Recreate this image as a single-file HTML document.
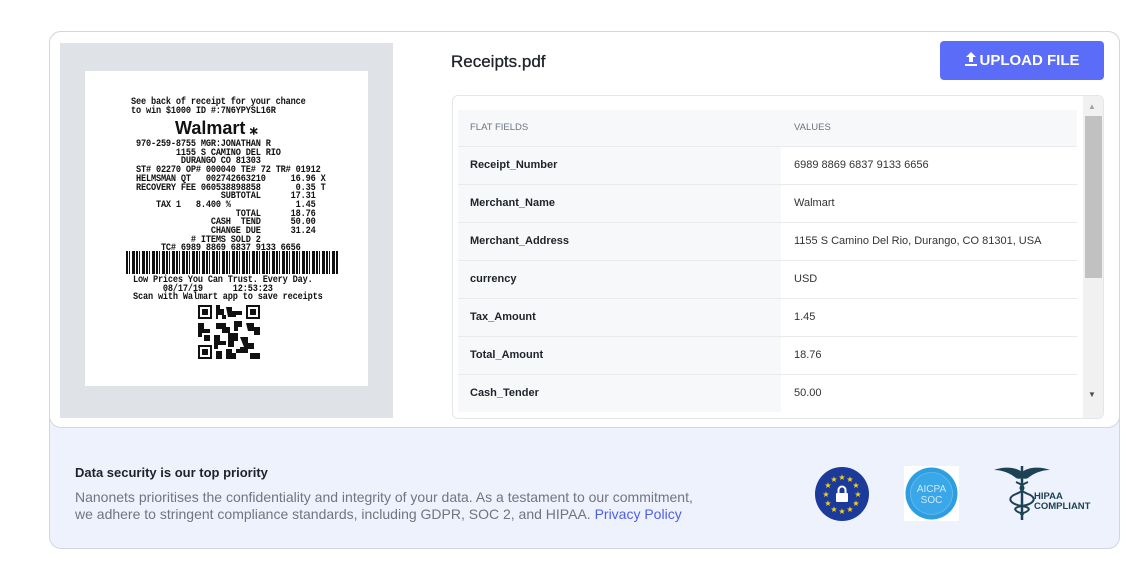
<!DOCTYPE html>
<html><head><meta charset="utf-8"><style>
*{margin:0;padding:0;box-sizing:border-box}
body{width:1141px;height:575px;background:#fff;font-family:"Liberation Sans",sans-serif;position:relative;overflow:hidden}
.outer{position:absolute;left:49px;top:31px;width:1071px;height:518px;border:1px solid #d3d6dc;border-radius:12px;background:#eef2fd}
.top{position:absolute;left:49px;top:31px;width:1071px;height:397px;border:1px solid #d3d6dc;border-radius:12px;background:#fff}
.imgbox{position:absolute;left:60px;top:43px;width:333px;height:375px;background:#dfe2e6}
.receipt{position:absolute;left:85px;top:71px;width:283px;height:315px;background:#fff;overflow:hidden}
.rt{position:absolute;font-family:"Liberation Mono",monospace;font-size:10px;font-weight:bold;line-height:8.7px;color:#111;white-space:pre;transform:scaleX(0.86);transform-origin:0 0;letter-spacing:-0.2px}
.title{position:absolute;left:451px;top:52px;font-size:17px;color:#1f2328;-webkit-text-stroke:0.3px #1f2328}
.btn{position:absolute;left:940px;top:41px;width:164px;height:39px;background:#5b6cf9;border-radius:4px;color:#fff;font-weight:bold;font-size:15px;text-align:center;line-height:39px}
.tbl{position:absolute;left:452px;top:95px;width:652px;height:324px;border:1px solid #e4e6ea;border-radius:6px;background:#fff;overflow:hidden}
.row{position:absolute;left:5px;width:619px;height:38px;border-top:1px solid #e8eaed;font-size:11px;color:#222}
.row .a{position:absolute;left:0;top:0;width:323px;height:100%;background:#f7f8fa;padding-left:12px;line-height:37px;font-weight:bold;color:#1e2329}
.row .b{position:absolute;left:336px;top:0;line-height:37px;color:#333}
.hd{position:absolute;left:5px;top:14px;width:619px;height:36px;background:#f7f8fa;font-size:9.5px;color:#6b7280;line-height:36px}
.sb{position:absolute;left:630px;top:0;width:22px;height:324px;background:#f1f1f1}
h4{position:absolute;left:75px;top:465px;font-size:13px;color:#1f2328}
p.d{position:absolute;left:75px;top:489px;font-size:14px;line-height:17px;color:#70757e;width:700px;white-space:nowrap}
p.d a{color:#4f5ee8;text-decoration:none}
</style></head><body>
<div class="outer"></div>
<div class="top"></div>
<div class="imgbox"></div>
<div class="receipt">
<div class="rt" style="left:46px;top:28px">See back of receipt for your chance
to win $1000 ID #:7N6YPYSL16R</div>
<div style="position:absolute;left:90px;top:47px;font-weight:bold;font-size:18px;color:#111;font-family:'Liberation Sans',sans-serif">Walmart<span style="font-size:16px"> ⁎</span></div>
<div class="rt" style="left:51px;top:70px">970-259-8755 MGR:JONATHAN R
        1155 S CAMINO DEL RIO
         DURANGO CO 81303
ST# 02270 OP# 000040 TE# 72 TR# 01912
HELMSMAN QT   002742663210     16.96 X
RECOVERY FEE 060538898858       0.35 T
                 SUBTOTAL      17.31
    TAX 1   8.400 %             1.45
                    TOTAL      18.76
               CASH  TEND      50.00
               CHANGE DUE      31.24
           # ITEMS SOLD 2
     TC# 6989 8869 6837 9133 6656</div>
<div style="position:absolute;left:41px;top:180px;width:212px;height:23px;background:repeating-linear-gradient(90deg,#111 0 2px,#fff 2px 3px,#111 3px 4px,#fff 4px 6px,#111 6px 9px,#fff 9px 10px)"></div>
<div class="rt" style="left:48px;top:206px">Low Prices You Can Trust. Every Day.
      08/17/19      12:53:23
Scan with Walmart app to save receipts</div>
<svg style="position:absolute;left:113px;top:233px" width="62" height="56" viewBox="0 0 31 27"><rect width="31" height="27" fill="#fff"/><g fill="#111"><rect x="0" y="0" width="7" height="7"/><rect x="24" y="0" width="7" height="7"/><rect x="0" y="20" width="7" height="7"/></g><g fill="#fff"><rect x="1" y="1" width="5" height="5"/><rect x="25" y="1" width="5" height="5"/><rect x="1" y="21" width="5" height="5"/></g><g fill="#111"><rect x="2" y="2" width="3" height="3"/><rect x="26" y="2" width="3" height="3"/><rect x="2" y="22" width="3" height="3"/><path d="M9 0h2v2h2v3h-3v2h-1zM14 1h3v2h2v3h-4zM9 9h5v2h2v3h-4v-2h-3zM18 8h4v3h-2v2h-2zM0 9h3v3h3v2h-4v2h-2zM24 9h4v2h3v4h-3v-2h-3zM8 15h3v3h3v2h-4v2h-2zM15 14h5v4h-2v3h-3zM21 16h4v3h3v3h-3v2h-4v-3h2zM9 23h3v4h-3zM14 22h3v2h2v3h-5zM26 24h5v3h-5zM3 15h3v3h-3zM12 5h2v2h-2zM19 3h3v2h-3zM11 18h2v2h-2zM19 22h2v2h-2z"/></g></svg>
</div>
<div class="title">Receipts.pdf</div>
<div class="btn"><svg width="12" height="15" viewBox="0 0 12 15" style="vertical-align:-2px;margin-right:3px"><path d="M6 0L11 5H8v5H4V5H1z" fill="#fff"/><rect x="0" y="12" width="12" height="2" fill="#fff"/></svg>UPLOAD FILE</div>
<div class="tbl">
<div class="hd"><span style="position:absolute;left:12px">FLAT FIELDS</span><span style="position:absolute;left:336px">VALUES</span></div>
<div class="row" style="top:50px"><div class="a">Receipt_Number</div><div class="b">6989 8869 6837 9133 6656</div></div>
<div class="row" style="top:88px"><div class="a">Merchant_Name</div><div class="b">Walmart</div></div>
<div class="row" style="top:126px"><div class="a">Merchant_Address</div><div class="b">1155 S Camino Del Rio, Durango, CO 81301, USA</div></div>
<div class="row" style="top:164px"><div class="a">currency</div><div class="b">USD</div></div>
<div class="row" style="top:202px"><div class="a">Tax_Amount</div><div class="b">1.45</div></div>
<div class="row" style="top:240px"><div class="a">Total_Amount</div><div class="b">18.76</div></div>
<div class="row" style="top:278px"><div class="a">Cash_Tender</div><div class="b">50.00</div></div>
<div class="sb"><div style="position:absolute;left:5px;top:6px;font-size:8px;color:#a3a3a3">▲</div><div style="position:absolute;left:2px;top:20px;width:17px;height:162px;background:#c1c1c1"></div><div style="position:absolute;left:5px;top:294px;font-size:8px;color:#505050">▼</div></div>
</div>
<h4>Data security is our top priority</h4>
<p class="d">Nanonets prioritises the confidentiality and integrity of your data. As a testament to our commitment,<br>we adhere to stringent compliance standards, including GDPR, SOC 2, and HIPAA. <a>Privacy Policy</a></p>
<svg style="position:absolute;left:814px;top:466px" width="56" height="56" viewBox="0 0 56 56"><circle cx="28" cy="28" r="27" fill="#1b3a9a"/><g fill="#f7d117" font-size="8" text-anchor="middle" font-family="DejaVu Sans"><text x="28" y="14">★</text><text x="36" y="16">★</text><text x="42" y="22">★</text><text x="44" y="31">★</text><text x="42" y="40">★</text><text x="36" y="46">★</text><text x="28" y="48">★</text><text x="20" y="46">★</text><text x="14" y="40">★</text><text x="12" y="31">★</text><text x="14" y="22">★</text><text x="20" y="16">★</text></g><rect x="22" y="27" width="12" height="9" rx="1" fill="#fff"/><path d="M24.5 27v-3a3.5 3.5 0 0 1 7 0v3" stroke="#fff" stroke-width="2" fill="none"/></svg>
<div style="position:absolute;left:904px;top:466px;width:55px;height:55px;background:#fff"><svg width="55" height="55"><circle cx="27.5" cy="27.5" r="26" fill="#2f9ee0"/><circle cx="27.5" cy="27.5" r="21" fill="#3aa8e8" stroke="#7cc8f0" stroke-width="0.6"/><text x="27.5" y="26" fill="#cfe9fb" font-size="10" text-anchor="middle" font-family="Liberation Sans">AICPA</text><text x="27.5" y="37" fill="#cfe9fb" font-size="10" text-anchor="middle" font-family="Liberation Sans">SOC</text></svg></div>
<svg style="position:absolute;left:992px;top:464px" width="105" height="58"><path d="M30 2v54" stroke="#1d4255" stroke-width="2.5"/><path d="M30 8c-8-6-20-5-28-2 8 0 16 3 22 8 2 1 4 1 6 0z M30 8c8-6 20-5 28-2-8 0-16 3-22 8-2 1-4 1-6 0z" fill="#1d4255"/><path d="M24 18c10 4 10 8 0 12s-6 10 6 12s6 6-2 8M36 18c-10 4-10 8 0 12s6 10-6 12s-6 6 2 8" stroke="#1d4255" stroke-width="2" fill="none"/><text x="42" y="35" font-size="9.5" font-weight="bold" fill="#1d4255" font-family="Liberation Sans">HIPAA</text><text x="42" y="45" font-size="9.5" font-weight="bold" fill="#1d4255" font-family="Liberation Sans">COMPLIANT</text></svg>
</body></html>
